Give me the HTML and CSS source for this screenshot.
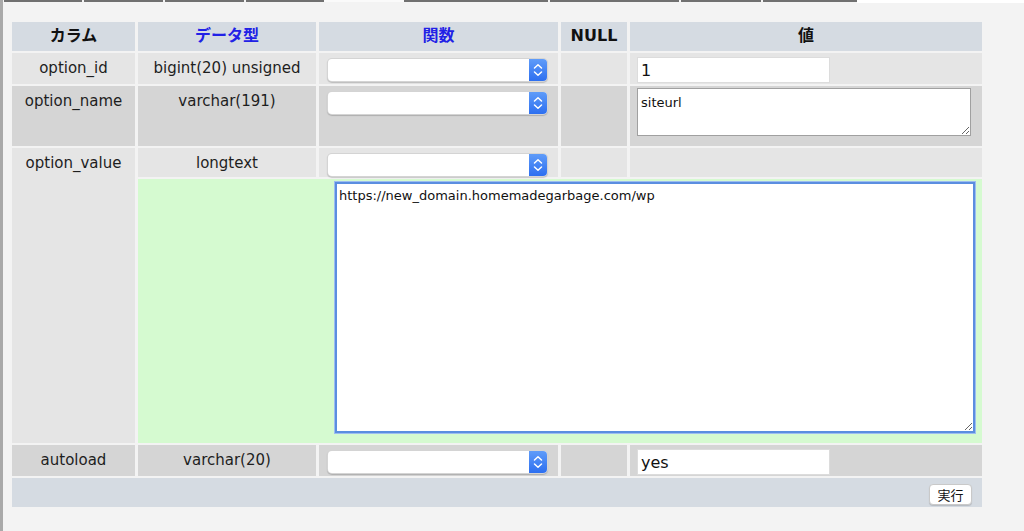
FILE: index.html
```html
<!DOCTYPE html>
<html lang="ja">
<head>
  <meta charset="UTF-8" />
  <title>Insert</title>
  <link rel="stylesheet" href="styles.css">
</head>
<body>
  <div class="frame">
    <div class="tabs">
      <span class="tab"></span>
      <span class="tab"></span>
      <span class="tab"></span>
      <span class="tab"></span>
      <span class="tab active"></span>
      <span class="tab"></span>
      <span class="tab"></span>
      <span class="tab"></span>
      <span class="tab"></span>
    </div>

    <div class="content">
      <table class="insert">
        <colgroup>
          <col class="c-name">
          <col class="c-type">
          <col class="c-func">
          <col class="c-null">
          <col class="c-value">
        </colgroup>
        <thead>
          <tr class="head">
            <th>カラム</th>
            <th><a href="#">データ型</a></th>
            <th><a href="#">関数</a></th>
            <th>NULL</th>
            <th>値</th>
          </tr>
        </thead>
        <tbody>
          <tr class="odd r-short">
            <td class="txt">option_id</td>
            <td class="txt">bigint(20) unsigned</td>
            <td class="fn">
              <div class="select">
                <span class="sel-field"></span>
                <span class="sel-btn"><svg width="18" height="22" viewBox="0 0 18 22"><path d="M5.5 9 L9 5.8 L12.5 9 M5.5 13 L9 16.2 L12.5 13" fill="none" stroke="#fff" stroke-width="1.5" stroke-linecap="round" stroke-linejoin="round"/></svg></span>
              </div>
            </td>
            <td></td>
            <td class="val"><input class="field" type="text" value="1"></td>
          </tr>
          <tr class="even r-name">
            <td class="txt">option_name</td>
            <td class="txt">varchar(191)</td>
            <td class="fn">
              <div class="select">
                <span class="sel-field"></span>
                <span class="sel-btn"><svg width="18" height="22" viewBox="0 0 18 22"><path d="M5.5 9 L9 5.8 L12.5 9 M5.5 13 L9 16.2 L12.5 13" fill="none" stroke="#fff" stroke-width="1.5" stroke-linecap="round" stroke-linejoin="round"/></svg></span>
              </div>
            </td>
            <td></td>
            <td class="val"><textarea class="small">siteurl</textarea></td>
          </tr>
          <tr class="odd r-mid">
            <td class="txt" rowspan="2">option_value</td>
            <td class="txt">longtext</td>
            <td class="fn">
              <div class="select">
                <span class="sel-field"></span>
                <span class="sel-btn"><svg width="18" height="22" viewBox="0 0 18 22"><path d="M5.5 9 L9 5.8 L12.5 9 M5.5 13 L9 16.2 L12.5 13" fill="none" stroke="#fff" stroke-width="1.5" stroke-linecap="round" stroke-linejoin="round"/></svg></span>
              </div>
            </td>
            <td></td>
            <td></td>
          </tr>
          <tr class="r-big">
            <td class="big-cell" colspan="4"><textarea class="big">https://new_domain.homemadegarbage.com/wp</textarea></td>
          </tr>
          <tr class="even r-short">
            <td class="txt">autoload</td>
            <td class="txt">varchar(20)</td>
            <td class="fn">
              <div class="select">
                <span class="sel-field"></span>
                <span class="sel-btn"><svg width="18" height="22" viewBox="0 0 18 22"><path d="M5.5 9 L9 5.8 L12.5 9 M5.5 13 L9 16.2 L12.5 13" fill="none" stroke="#fff" stroke-width="1.5" stroke-linecap="round" stroke-linejoin="round"/></svg></span>
              </div>
            </td>
            <td></td>
            <td class="val"><input class="field" type="text" value="yes"></td>
          </tr>
        </tbody>
        <tfoot>
          <tr class="foot">
            <td colspan="5"><button class="go">実行</button></td>
          </tr>
        </tfoot>
      </table>
    </div>
  </div>
</body>
</html>
```

FILE: styles.css
```css
:root {
  --page: #f3f3f3;
  --head: #d5dbe2;
  --odd: #e5e5e5;
  --even: #d5d5d5;
  --green: #d5fad0;
  --text: #222;
  --link: #2121e6;
}

body {
  margin: 0;
  background-color: var(--page);
  font-family: "DejaVu Sans", "Noto Sans CJK JP", sans-serif;
  color: var(--text);
}

.frame {
  border-left: 3px solid #a9a9a9;
  min-height: 531px;
  box-sizing: border-box;
}

/* bottom edges of the tab bar, cut off at the top */
.tabs {
  display: flex;
  height: 3px;
  padding-left: 1px;
}

.tab {
  height: 2px;
  background-color: #707070;
  margin-right: 2px;
}

.tab:nth-child(1) { width: 78px; }
.tab:nth-child(2) { width: 79px; }
.tab:nth-child(3) { width: 79px; }
.tab:nth-child(4) { width: 78px; margin-right: 0; }
.tab:nth-child(5) { width: 80px; margin-right: 0; background-color: #fafafa; }
.tab:nth-child(6) { width: 144px; }
.tab:nth-child(7) { width: 129px; }
.tab:nth-child(8) { width: 80px; }
.tab:nth-child(9) { width: 94px; margin-right: 0; }

.tabs::after {
  content: "";
  flex: 1;
  height: 3px;
  background-color: #fff;
}

.content {
  padding: 17px 0 0 6px;
}

.insert {
  border-collapse: separate;
  border-spacing: 3px 2px;
  table-layout: fixed;
  width: 976px;
}

.c-name { width: 123px; }
.c-type { width: 178px; }
.c-func { width: 239px; }
.c-null { width: 66px; }
.c-value { width: 352px; }

th,
td {
  padding: 0;
  vertical-align: top;
  line-height: 20px;
  font-size: 15px;
}

.head th {
  background-color: var(--head);
  font-size: 16px;
  font-weight: bold;
  color: #111;
  padding-top: 4px;
  text-align: center;
}

.head a {
  color: var(--link);
  text-decoration: none;
}

.head { height: 29px; }
.r-short { height: 31px; }
.r-name { height: 60px; }
.r-mid { height: 29px; }
.r-big { height: 264px; }
.foot { height: 29px; }

.odd td { background-color: var(--odd); }
.even td { background-color: var(--even); }

.txt {
  text-align: center;
  padding-top: 5px;
  color: #1e1e1e;
}

.fn {
  padding: 6px 0 0 9px;
}

.val {
  padding: 4px 0 0 7px;
}

.select {
  display: flex;
  width: 219px;
  height: 22px;
  border-radius: 4px;
  box-shadow: 0 0 0 1px #d4d4d4, 0 1px 1px 1px rgba(0, 0, 0, 0.18);
  background-color: #fff;
}

.sel-field {
  flex: 1;
}

.sel-btn {
  width: 18px;
  height: 22px;
  border-radius: 0 4px 4px 0;
  background: linear-gradient(#5f9cf9, #2d6ff0);
  display: flex;
}

.field {
  width: 193px;
  height: 26px;
  box-sizing: border-box;
  border: 1px solid #dcdcdc;
  background-color: #fff;
  margin: 0;
  padding: 0 3px;
  font-family: "DejaVu Sans", sans-serif;
  font-size: 16px;
  color: #111;
}

textarea {
  display: block;
  box-sizing: border-box;
  margin: 0;
  resize: both;
  font-family: "DejaVu Sans", sans-serif;
  font-size: 13px;
  line-height: 16px;
  color: #111;
  background-color: #fff;
}

.small {
  width: 334px;
  height: 48px;
  margin-top: -2px;
  border: 1px solid #a0a0a0;
  padding: 6px 3px;
}

.big-cell {
  background-color: var(--green);
  padding: 3px 7px 0 0;
}

.big {
  margin-left: auto;
  width: 640px;
  height: 251px;
  border: 2px solid #5b8ee0;
  box-shadow: 0 0 0 1px #9dbdf0;
  padding: 4px 2px;
  outline: none;
}

.foot td {
  background-color: var(--head);
  text-align: right;
  padding: 6px 10px 0 0;
}

.go {
  width: 43px;
  height: 21px;
  padding: 0;
  border: 1px solid #c9c9c9;
  border-radius: 4px;
  background-color: #fff;
  box-shadow: 0 1px 1px rgba(0, 0, 0, 0.15);
  font-family: "Noto Sans CJK JP", sans-serif;
  font-size: 13px;
  line-height: 19px;
  color: #111;
}
```
